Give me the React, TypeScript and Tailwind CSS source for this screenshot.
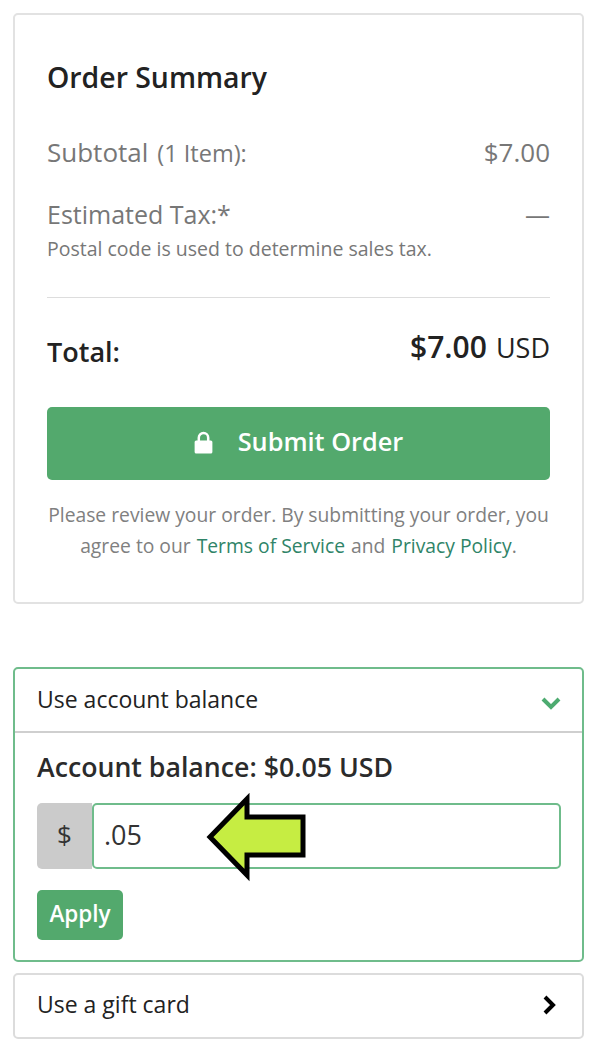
const font = "font-['Open_Sans','Lato',sans-serif]";

function LockIcon() {
  return (
    <svg width="19" height="23" viewBox="0 0 18 22" className="mr-[25px]" aria-hidden="true">
      <path d="M4.5 10V6.5a4.5 4.5 0 0 1 9 0V10" fill="none" stroke="white" strokeWidth="2.4" />
      <rect x="0.5" y="9" width="17" height="12.5" rx="1.5" fill="white" />
    </svg>
  );
}

function ChevronDown() {
  return (
    <svg width="20" height="20" viewBox="0 0 20 20" className="mt-[8px]" aria-hidden="true">
      <polyline points="2,5 10,13 18,5" fill="none" stroke="#4dab70" strokeWidth="4" />
    </svg>
  );
}

function ChevronRight() {
  return (
    <svg width="20" height="20" viewBox="0 0 20 20" aria-hidden="true">
      <polyline points="6,2 14,10 6,18" fill="none" stroke="#000" strokeWidth="4" />
    </svg>
  );
}

// Callout drawn over the amount input
function Arrow() {
  return (
    <svg width="108" height="90" viewBox="0 0 108 90" className="absolute left-[203px] top-[792px]" aria-hidden="true">
      <polygon
        points="7,45 44,7 44,25 100,25 100,63 44,63 44,83"
        fill="#c6ed42"
        stroke="black"
        strokeWidth="5"
      />
    </svg>
  );
}

export default function App() {
  return (
    <div className={`${font} relative w-[604px] h-[1050px] overflow-hidden bg-white pt-[13px] pl-[13px] pr-[20px]`}>
      <section className="h-[591px] rounded-[5px] border-2 border-[#e2e2e2] px-[32px] pt-[44px]">
        <h2 className="text-[28.4px] leading-[36px] font-semibold text-[#222]">Order Summary</h2>

        <div className="mt-[41px] flex h-[32px] items-baseline justify-between leading-[32px] text-[#777]">
          <span className="flex items-baseline gap-[9px]">
            <span className="text-[26px]">Subtotal</span>
            <span className="text-[23.5px]">(1 Item):</span>
          </span>
          <span className="text-[26px]">$7.00</span>
        </div>

        <div className="mt-[30px] flex justify-between text-[25px] leading-[32px] text-[#777]">
          <span>Estimated Tax:*</span>
          <span>—</span>
        </div>
        <p className="mt-[7px] text-[19.5px] leading-[24px] text-[#777]">Postal code is used to determine sales tax.</p>

        <hr className="mt-[36px] border-[#ddd]" />

        <div className="mt-[27px] flex justify-between text-[#222]">
          <span className="mt-[9px] text-[27px] leading-[36px] font-semibold">Total:</span>
          <span className="mt-[2px] flex items-baseline gap-[9px] leading-[40px]">
            <span className="text-[30px] font-semibold">$7.00</span>
            <span className="text-[27px] font-medium">USD</span>
          </span>
        </div>

        <button className="mt-[37px] flex h-[73px] w-full items-center justify-center rounded-[5px] bg-[#53a96d] pb-[3px] text-[25.3px] font-semibold text-white">
          <LockIcon />
          Submit Order
        </button>

        <div className="mt-[19px] text-center text-[19.3px] leading-[31px] text-[#808080]">
          <p className="whitespace-nowrap">Please review your order. By submitting your order, you</p>
          <p className="flex justify-center gap-[6px] whitespace-nowrap">
            <span>agree to our</span>
            <a className="text-[#2f8468]">Terms of Service</a>
            <span>and</span>
            <span className="flex">
              <a className="text-[#2f8468]">Privacy Policy</a>
              <span>.</span>
            </span>
          </p>
        </div>
      </section>

      <section className="mt-[63px] h-[295px] rounded-[5px] border-2 border-[#6fbc8b]">
        <div className="flex h-[64px] items-center justify-between border-b-2 border-[#cfcfcf] pb-[1px] pl-[22px] pr-[21px] text-[23px] text-[#222]">
          <span>Use account balance</span>
          <ChevronDown />
        </div>
        <div className="pl-[22px] pr-[21px] pt-[16px]">
          <div className="text-[26.7px] leading-[36px] font-semibold text-[#2b2b2b]">Account balance: $0.05 USD</div>
          <div className="mt-[18px] flex h-[66px]">
            <div className="flex w-[55px] items-center justify-center rounded-l-[5px] bg-[#cbcbcb] pb-[4px] text-[26px] text-[#333]">$</div>
            <div className="flex flex-1 items-center rounded-[5px] border-2 border-[#6fbc8b] bg-white pb-[2px] pl-[10px] text-[27px] text-[#333]">.05</div>
          </div>
          <button className="mt-[21px] h-[50px] w-[86px] rounded-[5px] bg-[#53a96d] pb-[2px] text-[22.5px] font-semibold text-white">Apply</button>
        </div>
      </section>

      <section className="mt-[11px] flex h-[66px] items-center justify-between rounded-[5px] border-2 border-[#dcdcdc] pb-[3px] pl-[22px] pr-[23px] text-[23px] text-[#222]">
        <span>Use a gift card</span>
        <ChevronRight />
      </section>

      <Arrow />
    </div>
  );
}
